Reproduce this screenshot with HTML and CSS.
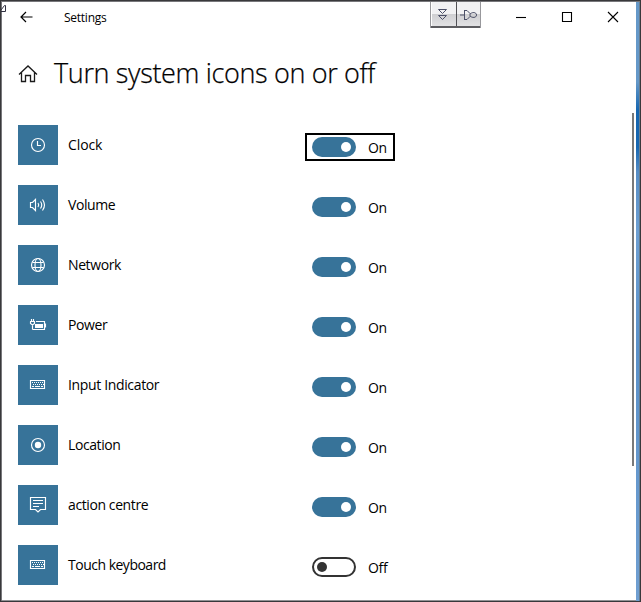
FILE: index.html
```html
<!DOCTYPE html>
<html lang="en-GB">
<head>
<meta charset="utf-8">
<title>Settings</title>
<link rel="stylesheet" href="styles.css">
</head>
<body>
<svg class="defs" aria-hidden="true">
  <symbol id="keyboard" viewBox="0 0 20 20">
    <path d="M2.5 5.5h14v8h-14z"/>
    <path stroke-dasharray="1 1" d="M4 7.5h12M5 9.5h11"/>
    <path d="M4 11.5h2M7 11.5h5M13 11.5h2"/>
  </symbol>
</svg>
<div class="window">
  <svg class="corner" viewBox="0 0 6 9"><path d="M0 7.5h4.5V1.5h-1L0 6"/></svg>
  <header class="titlebar">
    <svg class="back" viewBox="0 0 14 12"><path d="M12.500 6H1M6 1L1 6l5 5"/></svg>
    <span class="app-name">Settings</span>
    <div class="tools">
      <div class="tool"><svg viewBox="0 0 24 24"><path d="M6.500 7.500h8l-4 4zM6.500 13.500h8l-4 4z"/></svg></div>
      <div class="tool"><svg viewBox="0 0 24 24"><path d="M3 13h4M7.500 8v10M7.500 8.500h2.500l3 3v3l-3 3H7.500M13 12c2-2 6.500-2 6.500 1s-4.500 3-6.500 1"/></svg></div>
    </div>
    <div class="controls">
      <svg viewBox="0 0 12 12"><path d="M1 6.500h10"/></svg>
      <svg viewBox="0 0 12 12"><path d="M1.500 1.500h9v9h-9z"/></svg>
      <svg viewBox="0 0 12 12"><path d="M1 1l10 10M11 1L1 11"/></svg>
    </div>
  </header>
  <div class="heading">
    <svg class="home" viewBox="0 0 20 18"><path d="M1 9.500L10 1l9 8.500M3.500 7.500v9h4v-6h5v6h4v-9"/></svg>
    <h1>Turn system icons on or off</h1>
  </div>
  <main class="list">
    <div class="row">
      <span class="tile"><svg viewBox="0 0 20 20"><circle cx="10" cy="10" r="6.500"/><path d="M9.500 6v4.500H13"/></svg></span>
      <span class="label clock">Clock</span>
      <span class="switch focused"><i class="track"></i><span>On</span></span>
    </div>
    <div class="row">
      <span class="tile"><svg viewBox="0 0 20 20"><path d="M2.500 7.500h2l3-3v11l-3-3h-2zM10 8q1.500 2 0 4M12.500 6.500q2.500 3.500 0 7M14.500 4.500q4 5.500 0 11"/></svg></span>
      <span class="label volume">Volume</span>
      <span class="switch"><i class="track"></i><span>On</span></span>
    </div>
    <div class="row">
      <span class="tile"><svg viewBox="0 0 20 20"><circle cx="10" cy="10" r="6.500"/><ellipse cx="10" cy="10" rx="3" ry="6.500"/><path d="M4.500 7.500h11M4.500 12.500h11"/></svg></span>
      <span class="label network">Network</span>
      <span class="switch"><i class="track"></i><span>On</span></span>
    </div>
    <div class="row">
      <span class="tile"><svg viewBox="0 0 20 20"><path d="M3.500 4v2M5.500 4v2M2 6.500h5M2.500 6.500v2l2 1.500 2-1.500v-2M4.500 10v4.500M8 6.500h8.500v8h-12M17.500 8.500v4"/><path class="solid" d="M7 9h8v4H7z"/></svg></span>
      <span class="label power">Power</span>
      <span class="switch"><i class="track"></i><span>On</span></span>
    </div>
    <div class="row">
      <span class="tile"><svg viewBox="0 0 20 20"><use href="#keyboard"/></svg></span>
      <span class="label input">Input Indicator</span>
      <span class="switch"><i class="track"></i><span>On</span></span>
    </div>
    <div class="row">
      <span class="tile"><svg viewBox="0 0 20 20"><circle cx="10" cy="10" r="6.500"/><circle class="solid" cx="10" cy="10" r="3.200"/></svg></span>
      <span class="label location">Location</span>
      <span class="switch"><i class="track"></i><span>On</span></span>
    </div>
    <div class="row">
      <span class="tile"><svg viewBox="0 0 20 20"><path d="M2.500 2.500h15v12h-5L10 17l-2.500-2.500h-5zM5 5.500h10M5 8.500h10M5 11.500h6"/></svg></span>
      <span class="label action">action centre</span>
      <span class="switch"><i class="track"></i><span>On</span></span>
    </div>
    <div class="row">
      <span class="tile"><svg viewBox="0 0 20 20"><use href="#keyboard"/></svg></span>
      <span class="label touch">Touch keyboard</span>
      <span class="switch off"><i class="track"></i><span>Off</span></span>
    </div>
  </main>
  <div class="scrollbar"></div>
  <div class="edge"></div>
</div>
</body>
</html>
```

FILE: styles.css
```css
* { box-sizing: border-box; }
body { margin: 0; background: #fff; color: #000; font-family: "Open Sans", "Noto Sans", sans-serif; }
svg { fill: none; stroke: currentColor; stroke-width: 1; display: block; }
.defs { position: absolute; width: 0; height: 0; }
.window {
  position: relative;
  width: 641px;
  height: 602px;
  overflow: hidden;
  border: 1px solid #38383b;
  box-shadow: inset 1px 1px #77777b, inset 0 -1px #929295;
}
.corner { position: absolute; left: 0; top: 3px; width: 6px; height: 9px; color: #303040; }
.titlebar { display: flex; align-items: flex-start; height: 32px; padding: 1px 20px 0 19px; }
.back { width: 14px; height: 12px; margin-top: 9px; stroke-width: 1.2; }
.app-name { width: 366px; margin-left: 30px; padding-top: 7px; font-size: 12px; line-height: 18px; letter-spacing: -0.25px; }
.tools {
  display: flex;
  width: 51px;
  height: 26px;
  border: solid #98989c;
  border-width: 0 1px;
  box-shadow: inset 0 -2px #5c5c60;
}
.tool {
  width: 24px;
  height: 24px;
  margin-left: 1px;
  color: #4c5068;
  background: linear-gradient(#f1f1f3 0 48%, #cfcfd2 52%, #e2e2e4);
}
.tool + .tool { margin-left: 0; border-left: 1px solid #505055; }
.tool svg { width: 24px; height: 24px; }
.controls { display: flex; gap: 34px; margin: 9px 0 0 34px; }
.controls svg { width: 12px; height: 12px; stroke-width: 1.1; }
.heading { display: flex; align-items: center; height: 82px; padding-left: 17px; }
.home { width: 20px; height: 18px; stroke-width: 1.3; color: #1a1a1a; }
h1 { margin: 0 0 2px 16px; font-size: 27px; font-weight: 300; line-height: 36px; letter-spacing: -0.34px; white-space: nowrap; -webkit-text-stroke: 0.25px #000; }
.list { display: grid; grid-auto-rows: 40px; gap: 20px; padding: 10px 0 0 17px; }
.row { display: grid; grid-template-columns: 50px 237px 100px; align-items: center; font-size: 14px; line-height: 20px; }
.tile { display: grid; place-items: center; width: 40px; height: 40px; background: #377399; color: #fff; }
.tile svg { width: 20px; height: 20px; stroke-width: 1.15; }
.solid { fill: currentColor; stroke: none; }
.label { white-space: nowrap; letter-spacing: -0.4px; }
.clock { letter-spacing: -0.1px; }
.input { letter-spacing: -0.35px; }
.touch { letter-spacing: -0.5px; }
.switch { display: flex; align-items: center; width: 90px; height: 28px; margin-top: 4px; padding-left: 5px; border: 2px solid transparent; }
.focused { border-color: #000; }
.track { display: flex; align-items: center; justify-content: flex-end; width: 44px; height: 20px; border-radius: 10px; padding: 0 5px; background: #377399; }
.track::before { content: ""; width: 10px; height: 10px; border-radius: 50%; background: #fff; }
.switch span { margin: 2px 0 0 12px; letter-spacing: -0.3px; }
.off .track { justify-content: flex-start; border: 2px solid #333; padding: 0 3px; background: #fff; }
.off .track::before { background: #333; }
.scrollbar { position: absolute; left: 631px; top: 112px; width: 2px; height: 353px; background: #797979; }
.edge {
  position: absolute;
  right: 0;
  top: 1px;
  bottom: 0;
  width: 4px;
  border-right: 1px solid #687e91;
  background: linear-gradient(#6598c8 0, #6598c8 80px, #1767b1 108px, #1767b1 145px, #568dc5 170px, #6d9fd2 230px, #5b91c9 350px, #709fd1);
}
```
